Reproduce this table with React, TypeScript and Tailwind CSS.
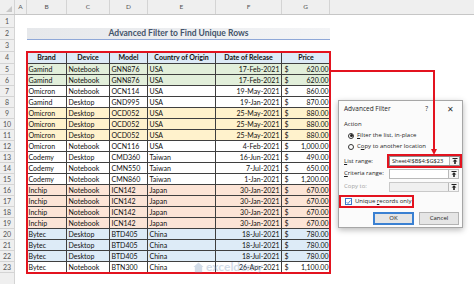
import React from "react";

type Rec = {
  brand: string;
  device: string;
  model: string;
  country: string;
  date: string;
  price: string;
  tint: string;
};

const GREEN = "bg-[#e2efda]";
const YELLOW = "bg-[#fff2cc]";
const PEACH = "bg-[#fce4d6]";
const BLUE = "bg-[#ddebf7]";
const WHITE = "bg-white";

const records: Rec[] = [
  { brand: "Gamind", device: "Notebook", model: "GNN876", country: "USA", date: "17-Feb-2021", price: "620.00", tint: GREEN },
  { brand: "Gamind", device: "Notebook", model: "GNN876", country: "USA", date: "17-Feb-2021", price: "620.00", tint: GREEN },
  { brand: "Omicron", device: "Notebook", model: "OCN114", country: "USA", date: "19-May-2021", price: "860.00", tint: WHITE },
  { brand: "Gamind", device: "Desktop", model: "GND995", country: "USA", date: "19-Jan-2021", price: "870.00", tint: WHITE },
  { brand: "Omicron", device: "Desktop", model: "OCD052", country: "USA", date: "25-May-2021", price: "880.00", tint: YELLOW },
  { brand: "Omicron", device: "Desktop", model: "OCD052", country: "USA", date: "25-May-2021", price: "880.00", tint: YELLOW },
  { brand: "Omicron", device: "Desktop", model: "OCD052", country: "USA", date: "25-May-2021", price: "880.00", tint: YELLOW },
  { brand: "Omicron", device: "Notebook", model: "OCN116", country: "USA", date: "4-Feb-2021", price: "1,000.00", tint: WHITE },
  { brand: "Codemy", device: "Desktop", model: "CMD360", country: "Taiwan", date: "16-Jun-2021", price: "490.00", tint: WHITE },
  { brand: "Codemy", device: "Notebook", model: "CMN550", country: "Taiwan", date: "7-Jul-2021", price: "650.00", tint: WHITE },
  { brand: "Codemy", device: "Notebook", model: "CMN860", country: "Taiwan", date: "1-Jan-2021", price: "1,200.00", tint: WHITE },
  { brand: "Inchip", device: "Notebook", model: "ICN142", country: "Japan", date: "30-Jan-2021", price: "670.00", tint: PEACH },
  { brand: "Inchip", device: "Notebook", model: "ICN142", country: "Japan", date: "30-Jan-2021", price: "670.00", tint: PEACH },
  { brand: "Inchip", device: "Notebook", model: "ICN142", country: "Japan", date: "30-Jan-2021", price: "670.00", tint: PEACH },
  { brand: "Inchip", device: "Notebook", model: "ICN142", country: "Japan", date: "30-Jan-2021", price: "670.00", tint: PEACH },
  { brand: "Bytec", device: "Desktop", model: "BTD405", country: "China", date: "18-Jul-2021", price: "780.00", tint: BLUE },
  { brand: "Bytec", device: "Desktop", model: "BTD405", country: "China", date: "18-Jul-2021", price: "780.00", tint: BLUE },
  { brand: "Bytec", device: "Desktop", model: "BTD405", country: "China", date: "18-Jul-2021", price: "780.00", tint: BLUE },
  { brand: "Bytec", device: "Notebook", model: "BTN300", country: "China", date: "26-Apr-2021", price: "1,100.00", tint: WHITE },
];

const cols = [
  { key: "A", w: "w-[12px]" },
  { key: "B", w: "w-[40px]" },
  { key: "C", w: "w-[43px]" },
  { key: "D", w: "w-[38px]" },
  { key: "E", w: "w-[68px]" },
  { key: "F", w: "w-[66px]" },
  { key: "G", w: "w-[48px]" },
];

const RowNum = ({ n, h }: { n?: number; h: string }) => (
  <div className={`${h} w-[15px] shrink-0 bg-[#efefef] border-r border-b border-[#d4d4d4] flex items-center justify-center text-[7px] text-[#555]`}>
    {n}
  </div>
);

const cell = "h-full border-r border-[#3f3f3f] flex items-center px-[1.5px] whitespace-nowrap overflow-hidden";

const UploadBtn = () => (
  <div className="w-[10px] h-full border-l border-[#b9b9b9] bg-[#f4f4f4] flex items-center justify-center">
    <svg width="6" height="6" viewBox="0 0 6 6">
      <rect x="0.5" y="0" width="5" height="1" fill="#222" />
      <path d="M3 1.2 L5.4 3.6 L3.8 3.6 L3.8 6 L2.2 6 L2.2 3.6 L0.6 3.6 Z" fill="#222" />
    </svg>
  </div>
);

const Dialog = () => (
  <div className="absolute left-[338px] top-[100px] w-[125px] h-[128px] bg-[#fbfbfb] border border-[#a6a6a6] shadow-[0_2px_6px_rgba(0,0,0,0.28)] font-['Open_Sans','Noto_Sans',sans-serif] text-[6px] text-[#1e1e1e] flex flex-col">
    <div className="h-[16px] flex items-center pl-[5px]">
      <span className="text-[6.5px]">Advanced Filter</span>
      <span className="ml-auto mr-[19px] text-[6.5px]">?</span>
      <span className="mr-[8px] text-[8px] leading-none text-[#333]">✕</span>
    </div>
    <div className="mt-[2px] h-[11px] flex items-center pl-[5px]">Action</div>
    <div className="h-[11px] flex items-center pl-[9px] gap-[3px]">
      <span className="w-[6px] h-[6px] rounded-full border border-[#333] bg-white flex items-center justify-center">
        <span className="w-[3px] h-[3px] rounded-full bg-[#222]" />
      </span>
      <span>
        <span className="underline">F</span>ilter the list, in-place
      </span>
    </div>
    <div className="h-[11px] flex items-center pl-[9px] gap-[3px]">
      <span className="w-[6px] h-[6px] rounded-full border border-[#333] bg-white" />
      <span>
        C<span className="underline">o</span>py to another location
      </span>
    </div>
    <div className="mt-[3px] h-[12px] flex items-center pl-[5px]">
      <span className="w-[44px]">
        <span className="underline">L</span>ist range:
      </span>
      <div className="h-[12px] w-[73px] outline-2 outline-[#e3131f] -outline-offset-1 p-[1px] flex">
        <div className="flex-1 h-full border border-[#8c8c8c] bg-white flex items-center">
          <span className="pl-[2px] text-[5.8px] tracking-[-0.1px]">Sheet4!$B$4:$G$23</span>
          <div className="ml-auto h-full">
            <UploadBtn />
          </div>
        </div>
      </div>
    </div>
    <div className="mt-[1px] h-[11px] flex items-center pl-[5px]">
      <span className="w-[45px]">
        <span className="underline">C</span>riteria range:
      </span>
      <div className="w-[70px] h-[10px] border border-[#b9b9b9] bg-white flex">
        <div className="ml-auto h-full">
          <UploadBtn />
        </div>
      </div>
    </div>
    <div className="mt-[2px] h-[11px] flex items-center pl-[5px]">
      <span className="w-[45px] text-[#a3a3a3]">Copy to:</span>
      <div className="w-[70px] h-[10px] border border-[#c9c9c9] bg-[#f0f0f0] flex">
        <div className="ml-auto h-full">
          <UploadBtn />
        </div>
      </div>
    </div>
    <div className="mt-[3px] h-[13px] w-[75px] border-2 border-[#e3131f] flex items-center pl-[4px] gap-[3px]">
      <span className="w-[7px] h-[7px] border border-[#3c78c9] bg-white flex items-center justify-center">
        <svg width="6" height="6" viewBox="0 0 6 6">
          <path d="M0.8 3.2 L2.4 4.8 L5.3 1.2" stroke="#2a6fc9" strokeWidth="1" fill="none" />
        </svg>
      </span>
      <span>
        Unique <span className="underline">r</span>ecords only
      </span>
    </div>
    <div className="mt-[4px] h-[13px] flex pl-[34px] gap-[5px]">
      <div className="w-[41px] h-full border-2 border-[#3a80d2] bg-[#e5e5e5] flex items-center justify-center">OK</div>
      <div className="w-[40px] h-full border border-[#b3b3b3] bg-[#e5e5e5] flex items-center justify-center">Cancel</div>
    </div>
  </div>
);

export default function App() {
  return (
    <div className="relative w-[474px] h-[284px] overflow-hidden bg-white font-['Lato','Liberation_Sans',sans-serif] text-[#111]">
      {/* column letters */}
      <div className="flex h-[15px] bg-[#efefef] border-b border-[#c6c6c6]">
        <div className="w-[15px] shrink-0 border-r border-[#d4d4d4] flex items-end justify-end p-[2px]">
          <div className="w-0 h-0 border-l-[6px] border-l-transparent border-b-[6px] border-b-[#c8c8c8]" />
        </div>
        {cols.map((c) => (
          <div key={c.key} className={`${c.w} shrink-0 border-r border-[#d4d4d4] flex items-center justify-center text-[6.5px] text-[#555]`}>
            {c.key}
          </div>
        ))}
        <div className="flex-1" />
      </div>

      {/* rows 1-3 */}
      <div className="flex h-[13px]">
        <RowNum n={1} h="h-[13px]" />
      </div>
      <div className="flex h-[12px]">
        <RowNum n={2} h="h-[12px]" />
        <div className="w-[12px]" />
        <div className="w-[303px] h-full bg-gradient-to-r from-[#e6e8eb] to-[#f3f4f6] border-b-[1.5px] border-[#8fa8d8] flex items-center justify-center text-[8.5px] font-bold text-[#44546a]">
          Advanced Filter to Find Unique Rows
        </div>
      </div>
      <div className="flex h-[12px]">
        <RowNum n={3} h="h-[12px]" />
      </div>

      {/* rows 4-23 */}
      <div className="flex">
        <div className="flex flex-col">
          <RowNum n={4} h="h-[12px]" />
          {records.map((_, i) => (
            <RowNum key={i} n={i + 5} h="h-[11px]" />
          ))}
        </div>
        <div className="w-[12px]" />
        <div className="w-[303px] outline-2 outline-[#e3131f] -outline-offset-1 text-[7px]">
          <div className="flex h-[12px] bg-[#ddebf7] border-b border-[#3f3f3f] font-bold">
            <div className={`${cell} w-[40px] justify-center`}>Brand</div>
            <div className={`${cell} w-[43px] justify-center`}>Device</div>
            <div className={`${cell} w-[38px] justify-center`}>Model</div>
            <div className={`${cell} w-[68px] justify-center`}>Country of Origin</div>
            <div className={`${cell} w-[66px] justify-center`}>Date of Release</div>
            <div className={`${cell} w-[48px] justify-center border-r-0`}>Price</div>
          </div>
          {records.map((r, i) => (
            <div key={i} className={`flex h-[11px] border-b border-[#3f3f3f] ${r.tint}`}>
              <div className={`${cell} w-[40px]`}>{r.brand}</div>
              <div className={`${cell} w-[43px]`}>{r.device}</div>
              <div className={`${cell} w-[38px]`}>{r.model}</div>
              <div className={`${cell} w-[68px]`}>{r.country}</div>
              <div className={`${cell} w-[66px] justify-end`}>{r.date}</div>
              <div className={`${cell} w-[48px] border-r-0`}>
                <span className="pl-[1px]">$</span>
                <span className="ml-auto">{r.price}</span>
              </div>
            </div>
          ))}
        </div>
      </div>
      <div className="flex h-[12px]">
        <RowNum h="h-[12px]" />
      </div>

      {/* watermark */}
      <div className="absolute left-[193px] top-[261px] flex items-center gap-[2px] opacity-35 pointer-events-none">
        <svg width="11" height="11" viewBox="0 0 12 12">
          <path d="M6 0.5 L11.5 5.5 L10 5.5 L10 11.5 L2 11.5 L2 5.5 L0.5 5.5 Z" fill="#7f9cc0" />
        </svg>
        <span className="text-[12px] font-bold text-[#7f9cc0] leading-none">exceldemy</span>
      </div>

      <Dialog />

      {/* connector from table to List range */}
      <svg className="absolute left-0 top-0 pointer-events-none" width="474" height="284">
        <path d="M330 71 H434 V150" stroke="#e3131f" strokeWidth="2" fill="none" />
        <path d="M431 149 L437 149 L434 155 Z" fill="#e3131f" />
      </svg>
    </div>
  );
}
